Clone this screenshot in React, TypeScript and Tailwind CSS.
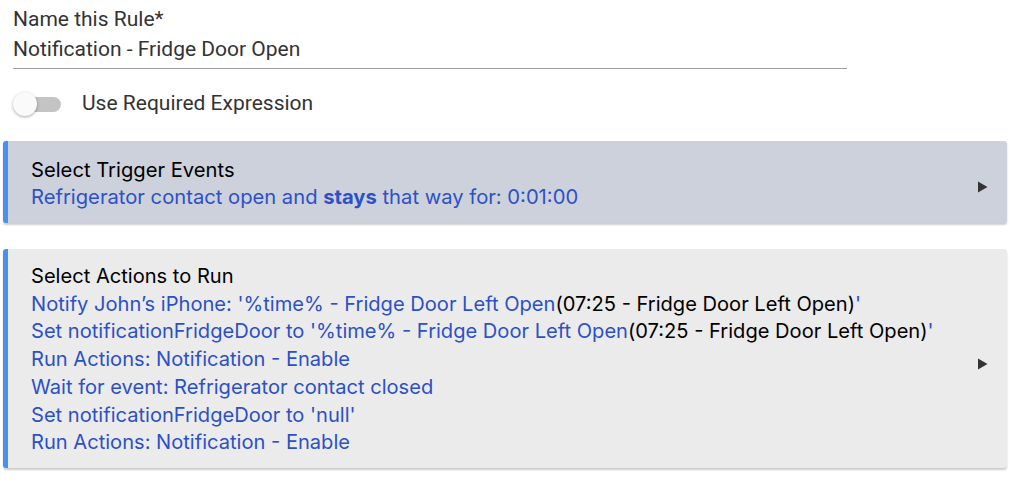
const blue = 'text-[#2c50c8]';

function Arrow() {
  return (
    <svg width="11" height="12" viewBox="0 0 11 12" className="shrink-0">
      <path d="M1 0.5 L10.5 6 L1 11.5 Z" fill="#333" />
    </svg>
  );
}

export default function App() {
  return (
    <div className="w-[1023px] h-[488px] bg-white overflow-hidden font-['Inter',sans-serif]">
      {/* Rule name */}
      <div className="pl-[13px] pt-[5px] w-[847px] font-['Roboto',sans-serif] text-[#333] text-[21px]">
        <div className="leading-[28px]">Name this Rule*</div>
        <div className="leading-[28px] pt-[2px] pb-[5px] border-b border-[#9e9e9e]">
          Notification - Fridge Door Open
        </div>
      </div>

      {/* Toggle */}
      <div className="flex items-center h-[40px] mt-[15px] pl-[13px] font-['Roboto',sans-serif]">
        <div className="relative w-[48px] h-[24px] flex items-center">
          <div className="ml-[2px] w-[46px] h-[15px] rounded-full bg-[#c4c4c4]" />
          <div className="absolute left-0 top-0 w-[24px] h-[24px] rounded-full bg-[#fafafa] shadow-[0_1px_3px_rgba(0,0,0,0.35)]" />
        </div>
        <span className="ml-[21px] text-[21px] text-[#333]">Use Required Expression</span>
      </div>

      {/* Trigger card */}
      <div className="mt-[17px] ml-[3px] w-[1004px] h-[82px] flex items-center bg-[#cdd1dc] border-l-[5px] border-[#4a90f2] rounded-[3px] shadow-[0_2px_2px_rgba(0,0,0,0.2)] pl-[23px] pr-[19px]">
        <div className="flex-1 text-[20.2px] leading-[27px] pt-[1px]">
          <div className="text-black">Select Trigger Events</div>
          <div className={blue}>
            Refrigerator contact open and <b className="font-bold">stays</b> that way for: 0:01:00
          </div>
        </div>
        <div className="mt-[9px]">
          <Arrow />
        </div>
      </div>

      {/* Actions card */}
      <div className="mt-[26px] ml-[3px] w-[1004px] h-[219px] flex items-center bg-[#ebebeb] border-l-[5px] border-[#4a90f2] rounded-[3px] shadow-[0_2px_2px_rgba(0,0,0,0.2)] pl-[23px] pr-[19px]">
        <div className="flex-1 text-[20.1px] leading-[27.8px] pt-[3px]">
          <div className="text-black">Select Actions to Run</div>
          <div className={blue}>
            Notify John’s iPhone: '%time% - Fridge Door Left Open
            <span className="text-black">(07:25 - Fridge Door Left Open)</span>'
          </div>
          <div className={blue}>
            Set notificationFridgeDoor to '%time% - Fridge Door Left Open
            <span className="text-black">(07:25 - Fridge Door Left Open)</span>'
          </div>
          <div className={blue}>Run Actions: Notification - Enable</div>
          <div className={blue}>Wait for event: Refrigerator contact closed</div>
          <div className={blue}>Set notificationFridgeDoor to 'null'</div>
          <div className={blue}>Run Actions: Notification - Enable</div>
        </div>
        <div className="mt-[10px]">
          <Arrow />
        </div>
      </div>
    </div>
  );
}
